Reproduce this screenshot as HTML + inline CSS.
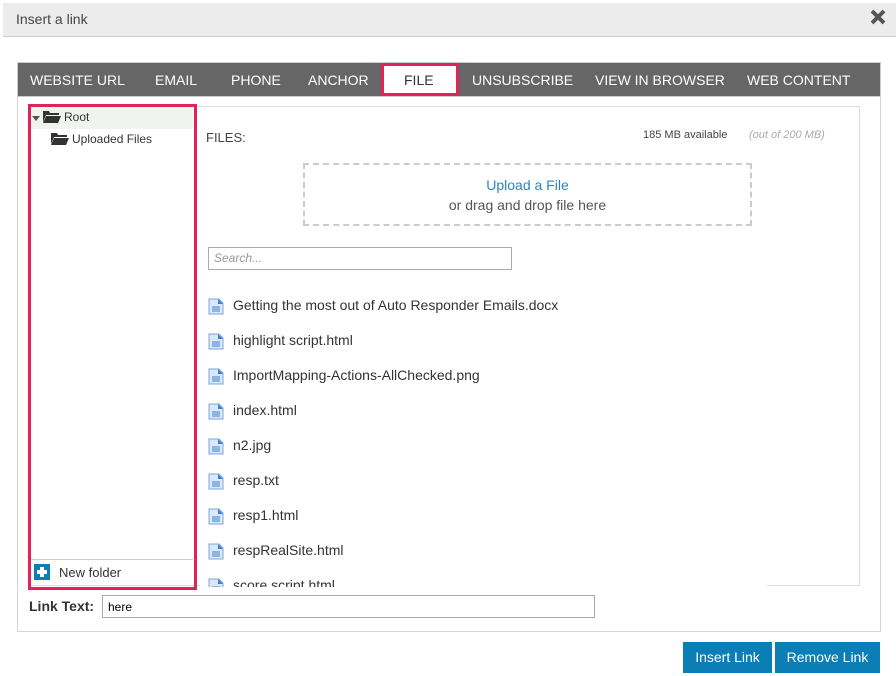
<!DOCTYPE html>
<html><head><style>
*{box-sizing:border-box;margin:0;padding:0}
body{width:896px;height:676px;background:#fff;font-family:"Liberation Sans",sans-serif;position:relative;overflow:hidden;color:#333}
.a{position:absolute}
.hdr{left:3px;top:3px;width:893px;height:34px;background:#ececec;border-bottom:1px solid #ccc}
.tabs{left:17px;top:62px;width:864px;height:35px;background:#666;border:1px solid #ccc}
.tab{position:absolute;top:10px;color:#fff;font-size:14px}
.panel{left:17px;top:62px;width:864px;height:570px;border:1px solid #d4d4d4}
.inner{left:30px;top:106px;width:830px;height:480px;border:1px solid #ddd}
.pink{border:3px solid #e3225c}
.fi{position:absolute;left:208px;font-size:14px;color:#333}
.fi svg{position:absolute;left:0;top:-7px}
.fi span{position:absolute;left:25px;top:-8px;white-space:nowrap}
.btn{background:#0a7eb5;color:#fff;font-size:14px;text-align:center;line-height:31px;top:642px;height:31px}
</style></head><body>
<div class="a hdr"></div>
<div class="a" style="left:16px;top:11px;font-size:14px;color:#444">Insert a link</div>
<svg class="a" style="left:870px;top:9px" width="16" height="16" viewBox="0 0 16 16"><path d="M2 2L14 14M14 2L2 14" stroke="#555" stroke-width="4"/></svg>
<div class="a panel"></div>
<div class="a tabs"></div>
<div class="tab a" style="left:30px;top:72px">WEBSITE URL</div>
<div class="tab a" style="left:155px;top:72px">EMAIL</div>
<div class="tab a" style="left:231px;top:72px">PHONE</div>
<div class="tab a" style="left:308px;top:72px">ANCHOR</div>
<div class="a pink" style="left:381px;top:63px;width:78px;height:33px;background:#fff"></div>
<div class="tab a" style="left:404px;top:72px;color:#333">FILE</div>
<div class="tab a" style="left:472px;top:72px">UNSUBSCRIBE</div>
<div class="tab a" style="left:595px;top:72px">VIEW IN BROWSER</div>
<div class="tab a" style="left:747px;top:72px">WEB CONTENT</div>
<div class="a inner"></div>
<div class="a" style="left:31px;top:107px;width:162px;height:22px;background:#f0f4ee"></div>
<div class="a" style="left:32px;top:116px;width:0;height:0;border-left:4px solid transparent;border-right:4px solid transparent;border-top:5px solid #555"></div>
<svg class="a" style="left:43px;top:110px" width="18" height="13" viewBox="0 0 18 13"><path d="M0 1h6l1 2h9v2H3L0 12z M3 6h15l-3 7H0z" fill="#333"/></svg>
<div class="a" style="left:64px;top:110px;font-size:12px;color:#333">Root</div>
<svg class="a" style="left:51px;top:132px" width="18" height="13" viewBox="0 0 18 13"><path d="M0 1h6l1 2h9v2H3L0 12z M3 6h15l-3 7H0z" fill="#333"/></svg>
<div class="a" style="left:72px;top:132px;font-size:12px;color:#333">Uploaded Files</div>
<div class="a" style="left:31px;top:559px;width:162px;border-top:1px solid #ccc"></div>
<div class="a" style="left:34px;top:564px;width:16px;height:16px;background:#0a7eb5"></div>
<div class="a" style="left:40px;top:567px;width:4px;height:10px;background:#fff"></div>
<div class="a" style="left:37px;top:570px;width:10px;height:4px;background:#fff"></div>
<div class="a" style="left:59px;top:565px;font-size:13px;color:#333">New folder</div>
<div class="a pink" style="left:28px;top:104px;width:169px;height:486px"></div>
<div class="a" style="left:206px;top:130px;font-size:13px;color:#444">FILES:</div>
<div class="a" style="left:643px;top:129px;font-size:11px;color:#444">185 MB available</div>
<div class="a" style="left:749px;top:129px;font-size:11px;color:#aaa;font-style:italic">(out of 200 MB)</div>
<div class="a" style="left:303px;top:163px;width:449px;height:63px;border:2px dashed #ccc"></div>
<div class="a" style="left:303px;top:177px;width:449px;text-align:center;font-size:14px;color:#2a84c5">Upload a File</div>
<div class="a" style="left:303px;top:197px;width:449px;text-align:center;font-size:14px;color:#555">or drag and drop file here</div>
<div class="a" style="left:208px;top:247px;width:304px;height:23px;border:1px solid #aaa;font-size:12px;color:#999;font-style:italic;padding:3px 5px">Search...</div>
<div class="a" style="left:200px;top:290px;width:567px;height:297px;overflow:hidden;background:#fff">
<div style="position:relative;left:-200px;top:-290px">
<div class="fi" style="top:305px"><svg width="16" height="17" viewBox="0 0 16 17"><path d="M1 1h10l4 4v11H1z" fill="#dbe8f8" stroke="#7aa6dd"/><path d="M10 1v5h5" fill="#3b7fd0"/><path d="M4 9h8M4 11h8M4 13h8" stroke="#3b7fd0"/></svg><span>Getting the most out of Auto Responder Emails.docx</span></div>
<div class="fi" style="top:340px"><svg width="16" height="17" viewBox="0 0 16 17"><path d="M1 1h10l4 4v11H1z" fill="#dbe8f8" stroke="#7aa6dd"/><path d="M10 1v5h5" fill="#3b7fd0"/><path d="M4 9h8M4 11h8M4 13h8" stroke="#3b7fd0"/></svg><span>highlight script.html</span></div>
<div class="fi" style="top:375px"><svg width="16" height="17" viewBox="0 0 16 17"><path d="M1 1h10l4 4v11H1z" fill="#dbe8f8" stroke="#7aa6dd"/><path d="M10 1v5h5" fill="#3b7fd0"/><path d="M4 9h8M4 11h8M4 13h8" stroke="#3b7fd0"/></svg><span>ImportMapping-Actions-AllChecked.png</span></div>
<div class="fi" style="top:410px"><svg width="16" height="17" viewBox="0 0 16 17"><path d="M1 1h10l4 4v11H1z" fill="#dbe8f8" stroke="#7aa6dd"/><path d="M10 1v5h5" fill="#3b7fd0"/><path d="M4 9h8M4 11h8M4 13h8" stroke="#3b7fd0"/></svg><span>index.html</span></div>
<div class="fi" style="top:445px"><svg width="16" height="17" viewBox="0 0 16 17"><path d="M1 1h10l4 4v11H1z" fill="#dbe8f8" stroke="#7aa6dd"/><path d="M10 1v5h5" fill="#3b7fd0"/><path d="M4 9h8M4 11h8M4 13h8" stroke="#3b7fd0"/></svg><span>n2.jpg</span></div>
<div class="fi" style="top:480px"><svg width="16" height="17" viewBox="0 0 16 17"><path d="M1 1h10l4 4v11H1z" fill="#dbe8f8" stroke="#7aa6dd"/><path d="M10 1v5h5" fill="#3b7fd0"/><path d="M4 9h8M4 11h8M4 13h8" stroke="#3b7fd0"/></svg><span>resp.txt</span></div>
<div class="fi" style="top:515px"><svg width="16" height="17" viewBox="0 0 16 17"><path d="M1 1h10l4 4v11H1z" fill="#dbe8f8" stroke="#7aa6dd"/><path d="M10 1v5h5" fill="#3b7fd0"/><path d="M4 9h8M4 11h8M4 13h8" stroke="#3b7fd0"/></svg><span>resp1.html</span></div>
<div class="fi" style="top:550px"><svg width="16" height="17" viewBox="0 0 16 17"><path d="M1 1h10l4 4v11H1z" fill="#dbe8f8" stroke="#7aa6dd"/><path d="M10 1v5h5" fill="#3b7fd0"/><path d="M4 9h8M4 11h8M4 13h8" stroke="#3b7fd0"/></svg><span>respRealSite.html</span></div>
<div class="fi" style="top:585px"><svg width="16" height="17" viewBox="0 0 16 17"><path d="M1 1h10l4 4v11H1z" fill="#dbe8f8" stroke="#7aa6dd"/><path d="M10 1v5h5" fill="#3b7fd0"/><path d="M4 9h8M4 11h8M4 13h8" stroke="#3b7fd0"/></svg><span>score script.html</span></div>
</div></div>
<div class="a" style="left:29px;top:598px;font-size:14px;font-weight:bold;color:#333">Link Text:</div>
<div class="a" style="left:102px;top:595px;width:493px;height:23px;border:1px solid #aaa;font-size:12px;padding:4px 5px;color:#000">here</div>
<div class="a btn" style="left:683px;width:89px">Insert Link</div>
<div class="a btn" style="left:775px;width:105px">Remove Link</div>
</body></html>
